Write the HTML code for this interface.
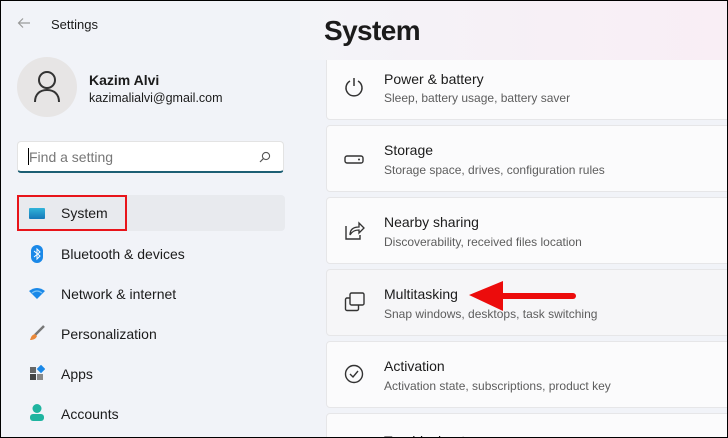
<!DOCTYPE html>
<html><head><meta charset="utf-8"><style>
*{margin:0;padding:0;box-sizing:border-box}
html,body{width:728px;height:438px;overflow:hidden}
body{background:#f1f3f8;font-family:"Liberation Sans",sans-serif;position:relative;color:#1b1b1b}
.frame{position:absolute;left:0;top:0;width:728px;height:438px;border:1px solid #000;z-index:50;pointer-events:none}
.abs{position:absolute}
.card{position:absolute;left:326px;width:410px;height:67px;background:#fbfbfc;border:1px solid #e6e6e8;border-radius:4px}
.card .t{position:absolute;left:57px;top:16px;font-size:14px;color:#1b1b1b}
.card .s{position:absolute;left:57px;top:37px;font-size:12px;color:#5d5d5d}
.card svg{position:absolute;left:17px;top:22px}
.nav{position:absolute;left:61px;font-size:14px;color:#1b1b1b}
</style></head><body>
<svg class="abs" style="left:17px;top:17px" width="14" height="12"><path d="M13 6H2M6 1.5L1.5 6 6 10.5" stroke="#9a9a9a" stroke-width="1.2" fill="none"/></svg>
<div class="abs" style="left:51px;top:17px;font-size:13px">Settings</div>
<div class="abs" style="left:17px;top:57px;width:60px;height:60px;border-radius:50%;background:#e7e5e5"></div>
<svg class="abs" style="left:33px;top:70px" width="28" height="34"><circle cx="14" cy="10" r="8" stroke="#333" stroke-width="2" fill="none"/><path d="M2 32c0-8 5-12 12-12s12 4 12 12" stroke="#333" stroke-width="2" fill="none"/></svg>
<div class="abs" style="left:89px;top:72px;font-size:14px;font-weight:bold">Kazim Alvi</div>
<div class="abs" style="left:89px;top:91px;font-size:12.5px">kazimalialvi@gmail.com</div>
<div class="abs" style="left:17px;top:141px;width:267px;height:32px;background:#fff;border:1px solid #e3e3e3;border-bottom:2px solid #1c5f74;border-radius:4px"></div>
<div class="abs" style="left:28px;top:148px;width:1px;height:17px;background:#000"></div>
<div class="abs" style="left:29px;top:149px;font-size:14px;color:#777">Find a setting</div>
<svg class="abs" style="left:259px;top:151px" width="12" height="12"><circle cx="7" cy="5" r="3.6" stroke="#555" stroke-width="1.1" fill="none"/><path d="M4.4 7.6L1 11" stroke="#555" stroke-width="1.2"/></svg>
<div class="abs" style="left:17px;top:195px;width:268px;height:36px;background:#e8eaee;border-radius:4px"></div>
<div class="abs" style="left:17px;top:195px;width:110px;height:36px;border:2px solid #e8141a"></div>
<div class="abs" style="left:29px;top:208px;width:16px;height:11px;background:linear-gradient(#31b4d9,#1578b8);border-radius:1px"></div>
<div class="nav" style="top:205px">System</div>
<svg class="abs" style="left:31px;top:245px" width="12" height="18"><rect width="12" height="18" rx="6" fill="#1a88e8"/><path d="M3 6l6 5-3 3V4l3 3-6 5" stroke="#fff" stroke-width="1" fill="none"/></svg>
<div class="nav" style="top:246px">Bluetooth &amp; devices</div>
<svg class="abs" style="left:29px;top:287px" width="16" height="12"><path d="M0 4Q8-2 16 4L8 12Z" fill="#1a88e8"/><path d="M3 6Q8 2 13 6" stroke="#7cc3f5" stroke-width="1.3" fill="none"/></svg>
<div class="nav" style="top:286px">Network &amp; internet</div>
<svg class="abs" style="left:29px;top:325px" width="16" height="16"><path d="M15 1L6 10" stroke="#777" stroke-width="2.5"/><path d="M6 9l2 2c-1 3-4 4-7 4 1-2 1-5 5-6z" fill="#e9883a"/></svg>
<div class="nav" style="top:326px">Personalization</div>
<svg class="abs" style="left:29px;top:365px" width="16" height="16"><rect x="1" y="2" width="6" height="6" fill="#666"/><rect x="1" y="9" width="6" height="6" fill="#444"/><rect x="8" y="9" width="6" height="6" fill="#888"/><rect x="9" y="1" width="6" height="6" fill="#1a88e8" transform="rotate(45 12 4)"/></svg>
<div class="nav" style="top:366px">Apps</div>
<svg class="abs" style="left:30px;top:404px" width="14" height="17"><circle cx="7" cy="4.5" r="4.5" fill="#1fb4a0"/><rect x="0" y="10" width="14" height="7" rx="3" fill="#1fb4a0"/></svg>
<div class="nav" style="top:406px">Accounts</div>
<div class="card" style="top:53px;height:67px"><svg width="20" height="22"><path d="M10 2v8" stroke="#333" stroke-width="1.5"/><path d="M6 5a8 8 0 1 0 8 0" stroke="#333" stroke-width="1.5" fill="none"/></svg><div class="t" style="top:17px">Power &amp; battery</div><div class="s" style="top:37px">Sleep, battery usage, battery saver</div></div>
<div class="abs" style="left:300px;top:0;width:428px;height:60px;background:linear-gradient(90deg,#f3f4f8,#f7f0f6 60%,#f9eef5);z-index:1"></div>
<div class="abs" style="left:324px;top:15px;font-size:28px;font-weight:bold;letter-spacing:-.6px;color:#1b1b1b;z-index:2">System</div>
<div class="card" style="top:125px"><svg width="20" height="14" style="top:27px"><rect x="1" y="3" width="18" height="7" rx="2" stroke="#333" stroke-width="1.4" fill="none"/><circle cx="15" cy="6.5" r="1" fill="#333"/></svg><div class="t">Storage</div><div class="s">Storage space, drives, configuration rules</div></div>
<div class="card" style="top:197px"><svg width="22" height="22"><path d="M2 6v13h14v-4" stroke="#333" stroke-width="1.4" fill="none"/><path d="M6 15c0-6 4-8 9-8V3l5 5-5 5V10c-4 0-7 1-9 5z" stroke="#333" stroke-width="1.3" fill="none"/></svg><div class="t">Nearby sharing</div><div class="s">Discoverability, received files location</div></div>
<div class="card" style="top:269px;background:#f6f6f8"><svg width="22" height="22"><rect x="6" y="1" width="14" height="12" rx="1.5" stroke="#333" stroke-width="1.4" fill="none"/><path d="M6 6H3a1.5 1.5 0 0 0-1.5 1.5V17a1.5 1.5 0 0 0 1.5 1.5h10A1.5 1.5 0 0 0 14.5 17v-4" stroke="#333" stroke-width="1.4" fill="none"/></svg><div class="t">Multitasking</div><div class="s">Snap windows, desktops, task switching</div>
<svg style="left:140px;top:11px" width="110" height="30"><path d="M30 12h76a3 3 0 0 1 0 6H30z" fill="#ec0c0c"/><path d="M2 14L36 0v30z" fill="#ec0c0c"/></svg></div>
<div class="card" style="top:341px"><svg width="20" height="20"><circle cx="10" cy="10" r="8.5" stroke="#333" stroke-width="1.4" fill="none"/><path d="M6 10l3 3 5-6" stroke="#333" stroke-width="1.4" fill="none"/></svg><div class="t">Activation</div><div class="s">Activation state, subscriptions, product key</div></div>
<div class="card" style="top:413px;height:30px"><div class="t" style="top:19px">Troubleshoot</div></div>
<div class="frame"></div>
</body></html>
